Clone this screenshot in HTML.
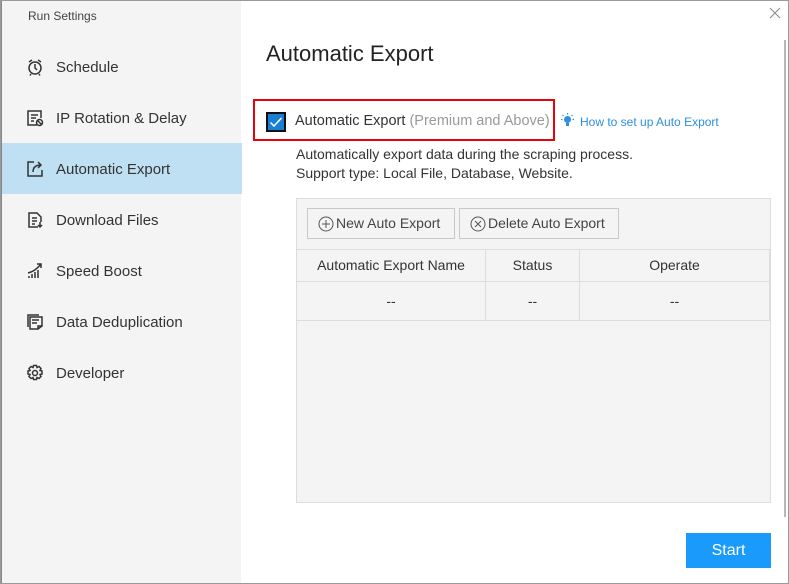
<!DOCTYPE html>
<html><head><meta charset="utf-8"><style>
*{box-sizing:border-box;margin:0;padding:0}
body{width:789px;height:584px;overflow:hidden;font-family:"Liberation Sans",Arial,sans-serif;background:#fff;position:relative;color:#333}
.frame{position:absolute;left:0;top:0;width:789px;height:584px;border:1px solid #9a9a9a}
.side{position:absolute;left:1px;top:1px;width:240px;height:582px;background:#f4f4f4;border-left:1px solid #888}
.title{position:absolute;left:26px;top:8px;font-size:12px;color:#444}
.item{position:absolute;left:0;width:240px;height:51px;font-size:15px;color:#333;line-height:53px;padding-left:54px}
.item.sel{background:#bfdff2}
.item svg{position:absolute;left:24px;top:17px;width:18px;height:18px;fill:none;stroke:#333;stroke-width:1.5}
h1{position:absolute;left:266px;top:41px;font-size:22px;font-weight:normal;color:#222}
.redbox{position:absolute;left:253px;top:99px;width:302px;height:42px;border:2px solid #e8000b}
.cb{position:absolute;left:266px;top:112px;width:20px;height:20px;background:#1a7fd4;border:2px solid #111}
.lbl{position:absolute;left:295px;top:113px;font-size:14.5px;color:#333}
.lbl span{color:#999}
.link{position:absolute;left:580px;top:115px;font-size:12px;color:#2c8fe0}
.desc{position:absolute;left:296px;top:145px;font-size:14px;line-height:19px;color:#333}
.tbl{position:absolute;left:296px;top:198px;width:475px;height:305px;background:#f4f4f4;border:1px solid #ddd}
.btn{position:absolute;top:208px;height:31px;border:1px solid #c8c8c8;background:#f4f4f4;font-size:14px;color:#444;line-height:29px;padding-left:28px}
.btn svg{position:absolute;left:10px;top:7px}
.row{position:absolute;left:297px;width:473px;border-top:1px solid #ddd;font-size:14px;color:#333}
.row div{position:absolute;top:0;height:100%;text-align:center;border-right:1px solid #ddd}
.start{position:absolute;left:686px;top:533px;width:85px;height:35px;background:#1a9bfc;color:#fff;font-size:16px;text-align:center;line-height:35px}
.sb{position:absolute;left:784px;top:40px;width:2px;height:477px;background:#b8b8b8}
</style></head><body>
<div class="frame"></div>
<div class="side">
<div class="title">Run Settings</div>
<div class="item" style="top:40px"><svg viewBox="0 0 18 18"><circle cx="9" cy="10" r="6"/><path d="M9 6v4l2 2M3 4l3-2M15 4l-3-2M5 16l-1 1.5M13 16l1 1.5"/></svg>Schedule</div>
<div class="item" style="top:91px"><svg viewBox="0 0 18 18"><path d="M11 16H2V2h13v7"/><path d="M5 6h7M5 9h5M5 12h3"/><circle cx="13.5" cy="13.5" r="3"/><path d="M11.5 11.5l4 4"/></svg>IP Rotation &amp; Delay</div>
<div class="item sel" style="top:142px"><svg viewBox="0 0 18 18"><path d="M8 2H2v14h14v-6"/><path d="M7 12c0-5 3-7 8-7M12 2l3 3-3 3"/></svg>Automatic Export</div>
<div class="item" style="top:193px"><svg viewBox="0 0 18 18"><path d="M12 16H3V2h8l4 4v5"/><path d="M6 7h5M6 10h5M6 13h3M14 11v5M12 14l2 2 2-2"/></svg>Download Files</div>
<div class="item" style="top:244px"><svg viewBox="0 0 18 18"><path d="M3 16v-2M6 16v-4M9 16v-6M12 16v-8M2 11c5-1 9-4 13-9M11 2h4v4"/></svg>Speed Boost</div>
<div class="item" style="top:295px"><svg viewBox="0 0 18 18"><path d="M2 14V2h11"/><path d="M4 4h12v9h-4v3H4z"/><path d="M6 7h7M6 10h5M12 16l4-3"/></svg>Data Deduplication</div>
<div class="item" style="top:346px"><svg viewBox="0 0 18 18"><circle cx="9" cy="9" r="2.5"/><path d="M7.5 1.5h3l.5 2 2-1 2 2-1 2 2 .5v3l-2 .5 1 2-2 2-2-1-.5 2h-3l-.5-2-2 1-2-2 1-2-2-.5v-3l2-.5-1-2 2-2 2 1z"/></svg>Developer</div>
</div>
<svg style="position:absolute;left:769px;top:7px" width="12" height="12" viewBox="0 0 12 12"><path d="M1 1l10 10M11 1L1 11" stroke="#888" stroke-width="1"/></svg>
<div class="sb"></div>
<h1>Automatic Export</h1>
<div class="redbox"></div>
<div class="cb"><svg width="16" height="16" viewBox="0 0 16 16" style="position:absolute;left:0;top:0"><path d="M2.5 8.5l3.5 3.5 7.5-8" stroke="#fff" stroke-width="1.5" fill="none"/></svg></div>
<div class="lbl">Automatic Export <span>(Premium and Above)</span></div>
<svg style="position:absolute;left:560px;top:113px" width="15" height="16" viewBox="0 0 15 16"><circle cx="7.5" cy="6.5" r="3.5" fill="#2c8fe0"/><rect x="6" y="10" width="3" height="3" fill="#2c8fe0"/><path d="M7.5 0v1.5M1 6.5h1.5M12.5 6.5H14M2.5 2l1 1M12.5 2l-1 1" stroke="#2c8fe0" stroke-width="1.2"/></svg>
<div class="link">How to set up Auto Export</div>
<div class="desc">Automatically export data during the scraping process.<br>Support type: Local File, Database, Website.</div>
<div class="tbl"></div>
<div class="btn" style="left:307px;width:148px"><svg width="16" height="16" viewBox="0 0 16 16"><circle cx="8" cy="8" r="7" fill="none" stroke="#555"/><path d="M8 4v8M4 8h8" stroke="#555"/></svg>New Auto Export</div>
<div class="btn" style="left:459px;width:160px"><svg width="16" height="16" viewBox="0 0 16 16"><circle cx="8" cy="8" r="7" fill="none" stroke="#555"/><path d="M5 5l6 6M11 5l-6 6" stroke="#555"/></svg>Delete Auto Export</div>
<div class="row" style="top:249px;height:32px;line-height:31px"><div style="left:0;width:189px">Automatic Export Name</div><div style="left:189px;width:94px">Status</div><div style="left:283px;width:190px">Operate</div></div>
<div class="row" style="top:281px;height:40px;line-height:39px;border-bottom:1px solid #ddd"><div style="left:0;width:189px">--</div><div style="left:189px;width:94px">--</div><div style="left:283px;width:190px">--</div></div>
<div class="start">Start</div>
</body></html>
